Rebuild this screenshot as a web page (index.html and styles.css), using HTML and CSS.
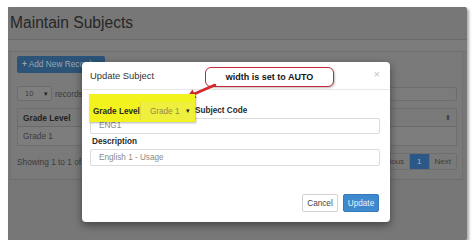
FILE: index.html
```html
<!DOCTYPE html>
<html>
<head>
<meta charset="utf-8">
<link rel="stylesheet" href="styles.css">
</head>
<body>
<div class="screen">
  <div class="page-header">Maintain Subjects</div>
  <div class="band"></div>
  <div class="panel">
    <div class="btn-add"><span class="plus">+</span> Add New Record</div>
    <div class="controls">
      <div class="len"><span>10</span><span class="caret">▾</span></div>
      <span class="muted">records</span>
      <div class="search"></div>
    </div>
    <div class="table">
      <div class="tr th"><span>Grade Level</span><span class="sort">⬍</span></div>
      <div class="tr td"><span>Grade 1</span></div>
    </div>
    <div class="info">
      <span class="muted">Showing 1 to 1 of 1</span>
      <div class="pager">
        <span class="pg">Previous</span><span class="pg active">1</span><span class="pg">Next</span>
      </div>
    </div>
  </div>

  <div class="modal">
    <div class="modal-header">
      <span class="modal-title">Update Subject</span>
      <span class="close">×</span>
    </div>
    <div class="modal-body">
      <div class="row1">
        <div class="hl">
          <span class="lbl">Grade Level</span>
          <div class="sel"><span>Grade 1</span><span class="caret2">▾</span></div>
        </div>
        <span class="lbl code">Subject Code</span>
      </div>
      <div class="input">ENG1</div>
      <div class="lbl desc">Description</div>
      <div class="input tall">English 1 - Usage</div>
    </div>
    <div class="modal-footer">
      <span class="btn cancel">Cancel</span>
      <span class="btn update">Update</span>
    </div>
  </div>

  <div class="callout">width is set to AUTO</div>
  <svg class="arrow" width="45" height="24" viewBox="0 0 45 24">
    <line x1="39" y1="5" x2="18" y2="14" stroke="#d3282c" stroke-width="2.6" stroke-linecap="round"/>
    <polygon points="11,17 20.5,18 16.5,9.6" fill="#d3282c"/>
  </svg>
</div>
</body>
</html>
```
FILE: styles.css
```css
html, body {
  margin: 0;
  padding: 0;
  background: #ffffff;
}
body {
  font-family: "Liberation Sans", Arial, sans-serif;
}
.screen {
  position: relative;
  margin: 7px 0 0 8px;
  width: 459px;
  height: 233px;
  background: #777777;
  box-shadow: 2px 2px 3px rgba(0,0,0,0.35);
  overflow: hidden;
  border-radius: 0 2px 2px 0;
  white-space: nowrap;
}
.page-header {
  height: 32px;
  line-height: 32px;
  padding-left: 2px;
  font-size: 15.6px;
  color: #262626;
  border-bottom: 1px solid #6b6b6b;
}
.band {
  height: 11px;
  background: #7b7b7b;
  border-bottom: 1px solid #6e6e6e;
}
.panel {
  margin: 0 4px 0 2px;
  height: 128px;
  background: #7a7a7a;
  border-left: 1px solid #717171;
  border-right: 1px solid #717171;
  border-bottom: 1px solid #6c6c6c;
  padding: 4px 5px 0 6px;
  box-sizing: border-box;
}
.btn-add {
  width: 88px;
  height: 17px;
  line-height: 17px;
  background: #2c5478;
  border-radius: 2px;
  color: #9aa7b3;
  font-size: 8.3px;
  padding-left: 5px;
  box-sizing: border-box;
}
.plus { font-weight: bold; }
.controls {
  display: flex;
  align-items: center;
  margin-top: 13px;
  height: 15px;
}
.len {
  width: 35px;
  height: 15px;
  box-sizing: border-box;
  border: 1px solid #6c6c6c;
  background: #7e7e7e;
  border-radius: 2px;
  display: flex;
  align-items: center;
  justify-content: space-between;
  padding: 0 3px 0 7px;
  font-size: 7.5px;
  color: #3c3c3c;
}
.caret { font-size: 7px; color: #222; }
.muted {
  font-size: 8.3px;
  color: #3a3a3a;
}
.controls .muted { margin-left: 3px; }
.search {
  margin-left: auto;
  width: 77px;
  height: 14px;
  box-sizing: border-box;
  border: 1px solid #6c6c6c;
  background: #7b7b7b;
  border-radius: 2px;
}
.table {
  margin-top: 7px;
  border: 1px solid #6e6e6e;
}
.tr {
  display: flex;
  align-items: center;
  justify-content: space-between;
  padding: 0 5px;
  font-size: 8.3px;
}
.th {
  height: 17px;
  font-weight: bold;
  color: #222;
  border-bottom: 1px solid #6a6a6a;
}
.sort { font-size: 7px; color: #3a3a3a; font-weight: normal; }
.td {
  height: 18px;
  color: #3c3c3c;
  background: #7d7d7d;
}
.info {
  display: flex;
  align-items: center;
  justify-content: space-between;
  margin-top: 7px;
  height: 17px;
}
.pager {
  display: flex;
  height: 17px;
  border: 1px solid #6e6e6e;
  border-radius: 2px;
  box-sizing: border-box;
}
.pg {
  font-size: 8px;
  color: #3d3d3d;
  padding: 0 5px;
  line-height: 15px;
  border-left: 1px solid #6e6e6e;
}
.pg:first-child { border-left: none; }
.pg.active {
  background: #2b5886;
  color: #9fb3c8;
  padding: 0 7px;
}
.modal {
  position: absolute;
  left: 74px;
  top: 55px;
  width: 308px;
  height: 160px;
  background: #ffffff;
  border-radius: 4px;
  box-shadow: 0 3px 8px rgba(0,0,0,0.45);
  display: flex;
  flex-direction: column;
}
.modal-header {
  height: 27px;
  border-bottom: 1px solid #e8e8e8;
  display: flex;
  align-items: center;
  justify-content: space-between;
  padding: 0 10px 0 8px;
}
.modal-title {
  font-size: 9.4px;
  color: #333333;
}
.close {
  font-size: 11px;
  color: #c4c4c4;
  margin-top: -4px;
}
.modal-body {
  padding: 4px 10px 0 8px;
}
.row1 {
  display: flex;
  align-items: flex-start;
  height: 24px;
}
.hl {
  position: relative;
  z-index: 1;
  flex: none;
  margin-left: -1px;
  width: 106px;
  height: 28px;
  box-sizing: border-box;
  background: #f2f21c;
  box-shadow: 1px 1px 2px rgba(0,0,0,0.3);
  display: flex;
  align-items: center;
  padding: 6px 3px 0 4px;
}
.lbl {
  font-size: 8.2px;
  font-weight: bold;
  color: #2a2a2a;
}
.sel {
  flex: none;
  margin-left: auto;
  width: 53px;
  height: 18px;
  box-sizing: border-box;
  background: #efef3e;
  border-left: 1px solid #dede40;
  display: flex;
  align-items: center;
  justify-content: space-between;
  padding: 0 3px 0 9px;
  font-size: 8.2px;
  color: #8c8c50;
}
.caret2 { font-size: 7px; color: #222; }
.code {
  margin-left: 0;
  line-height: 28px;
  height: 24px;
  margin-top: 3px;
}
.input {
  height: 16px;
  box-sizing: border-box;
  border: 1px solid #dcdcdc;
  border-radius: 2px;
  padding-left: 8px;
  font-size: 8.2px;
  line-height: 14px;
  color: #8a8a8a;
}
.input.tall {
  height: 17px;
  line-height: 15px;
}
.desc {
  display: block;
  margin: 2px 0 2px 2px;
  line-height: 11px;
}
.modal-footer {
  margin-top: auto;
  display: flex;
  justify-content: flex-end;
  gap: 5px;
  padding: 0 11px 10px 0;
}
.btn {
  width: 36px;
  height: 18px;
  box-sizing: border-box;
  border-radius: 2px;
  font-size: 8.2px;
  display: flex;
  align-items: center;
  justify-content: center;
}
.cancel {
  border: 1px solid #d2d2d2;
  color: #444;
  background: #fff;
}
.update {
  background: #3f89cf;
  border: 1px solid #3479bb;
  color: #e8f1fa;
}
.callout {
  position: absolute;
  left: 197px;
  top: 60px;
  width: 129px;
  height: 20px;
  box-sizing: border-box;
  border: 1.5px solid #c5283d;
  border-radius: 6px;
  background: #ffffff;
  box-shadow: 1px 1px 2px rgba(0,0,0,0.25);
  font-size: 9px;
  font-weight: bold;
  color: #151515;
  display: flex;
  align-items: center;
  justify-content: center;
}
.arrow {
  position: absolute;
  left: 168px;
  top: 73px;
}
```
